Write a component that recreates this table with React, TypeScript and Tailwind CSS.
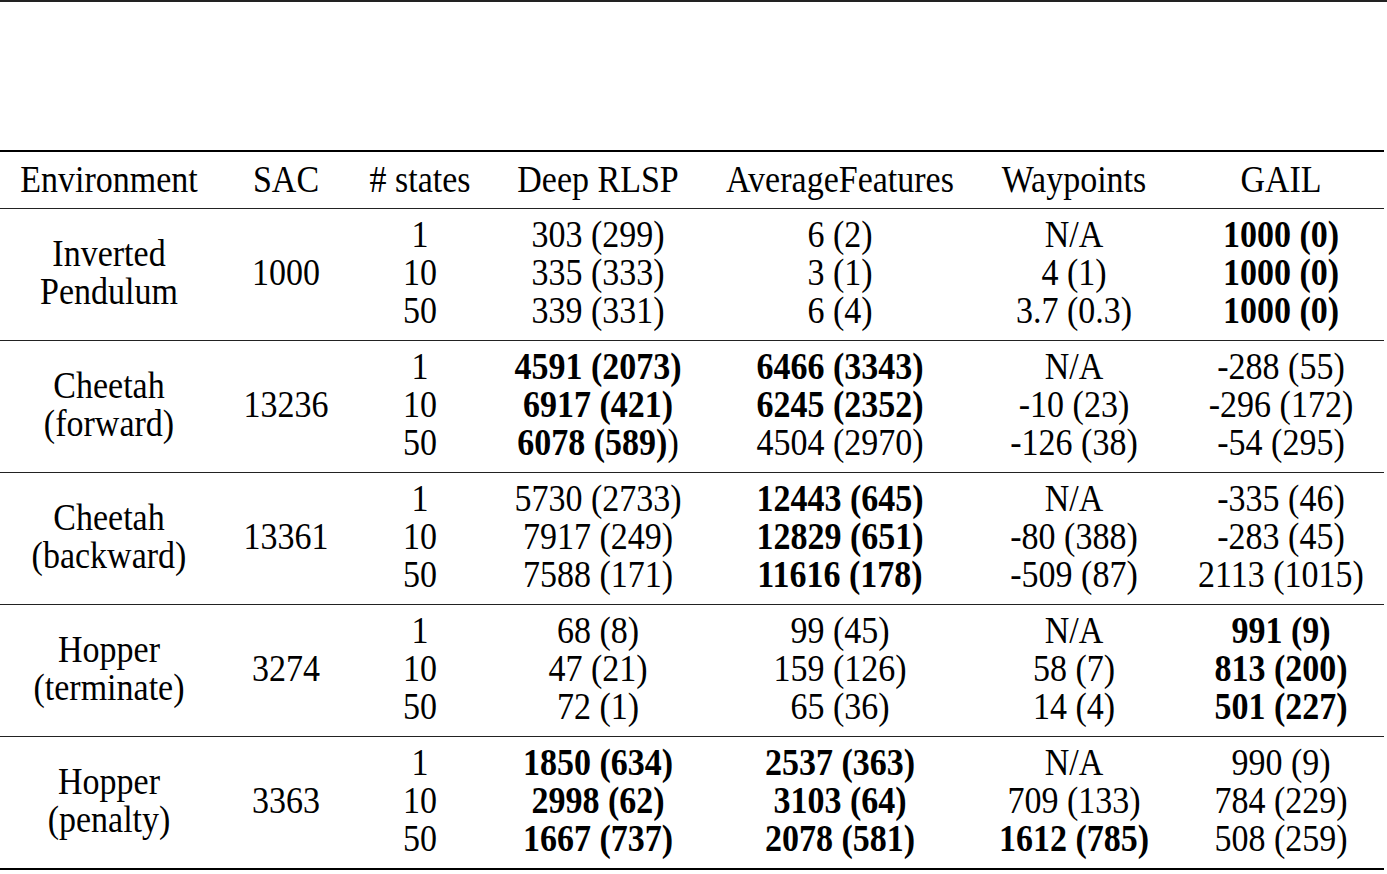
import React from "react";

type Part = { t: string; b?: boolean };
type Cell = Part[];

const n = (t: string): Cell => [{ t }];
const b = (t: string): Cell => [{ t, b: true }];

interface Group {
  env: [string, string];
  sac: string;
  rows: { s: string; cells: Cell[] }[];
}

const groups: Group[] = [
  {
    env: ["Inverted", "Pendulum"],
    sac: "1000",
    rows: [
      { s: "1", cells: [n("303 (299)"), n("6 (2)"), n("N/A"), b("1000 (0)")] },
      { s: "10", cells: [n("335 (333)"), n("3 (1)"), n("4 (1)"), b("1000 (0)")] },
      { s: "50", cells: [n("339 (331)"), n("6 (4)"), n("3.7 (0.3)"), b("1000 (0)")] },
    ],
  },
  {
    env: ["Cheetah", "(forward)"],
    sac: "13236",
    rows: [
      { s: "1", cells: [b("4591 (2073)"), b("6466 (3343)"), n("N/A"), n("-288 (55)")] },
      { s: "10", cells: [b("6917 (421)"), b("6245 (2352)"), n("-10 (23)"), n("-296 (172)")] },
      { s: "50", cells: [[{ t: "6078 (589)", b: true }, { t: ")" }], n("4504 (2970)"), n("-126 (38)"), n("-54 (295)")] },
    ],
  },
  {
    env: ["Cheetah", "(backward)"],
    sac: "13361",
    rows: [
      { s: "1", cells: [n("5730 (2733)"), b("12443 (645)"), n("N/A"), n("-335 (46)")] },
      { s: "10", cells: [n("7917 (249)"), b("12829 (651)"), n("-80 (388)"), n("-283 (45)")] },
      { s: "50", cells: [n("7588 (171)"), b("11616 (178)"), n("-509 (87)"), n("2113 (1015)")] },
    ],
  },
  {
    env: ["Hopper", "(terminate)"],
    sac: "3274",
    rows: [
      { s: "1", cells: [n("68 (8)"), n("99 (45)"), n("N/A"), b("991 (9)")] },
      { s: "10", cells: [n("47 (21)"), n("159 (126)"), n("58 (7)"), b("813 (200)")] },
      { s: "50", cells: [n("72 (1)"), n("65 (36)"), n("14 (4)"), b("501 (227)")] },
    ],
  },
  {
    env: ["Hopper", "(penalty)"],
    sac: "3363",
    rows: [
      { s: "1", cells: [b("1850 (634)"), b("2537 (363)"), n("N/A"), n("990 (9)")] },
      { s: "10", cells: [b("2998 (62)"), b("3103 (64)"), n("709 (133)"), n("784 (229)")] },
      { s: "50", cells: [b("1667 (737)"), b("2078 (581)"), b("1612 (785)"), n("508 (259)")] },
    ],
  },
];

const COLS = "grid grid-cols-[218px_136px_132px_224px_260px_208px_206px]";
// glyphs in the reference sit a bit taller than Liberation Serif's
const TALL = "inline-block whitespace-nowrap scale-y-[1.1]";

function Text({ cell }: { cell: Cell }) {
  return (
    <span className={TALL}>
      {cell.map((p, i) => (
        <span key={i} className={p.b ? "font-bold" : ""}>{p.t}</span>
      ))}
    </span>
  );
}

function GroupBlock({ g }: { g: Group }) {
  return (
    <div className={`${COLS} grid-rows-[38px_38px_38px] pt-[7px] pb-[10px]`}>
      <div className="row-span-3 col-start-1 row-start-1 flex flex-col items-center justify-center leading-[38px]">
        <span className={TALL}>{g.env[0]}</span>
        <span className={TALL}>{g.env[1]}</span>
      </div>
      <div className="row-span-3 col-start-2 row-start-1 flex items-center justify-center">
        <span className={TALL}>{g.sac}</span>
      </div>
      {g.rows.map((r, ri) => (
        <React.Fragment key={ri}>
          <div className="col-start-3 flex items-center justify-center">
            <span className={TALL}>{r.s}</span>
          </div>
          {r.cells.map((c, ci) => (
            <div key={ci} className="flex items-center justify-center">
              <Text cell={c} />
            </div>
          ))}
        </React.Fragment>
      ))}
    </div>
  );
}

export default function App() {
  const headers = ["Environment", "SAC", "# states", "Deep RLSP", "AverageFeatures", "Waypoints", "GAIL"];
  return (
    <div
      className="w-[1387px] h-[874px] bg-white text-black text-[34px] leading-[38px] overflow-hidden"
      style={{ fontFamily: '"Liberation Serif", "Times New Roman", serif' }}
    >
      <div className="h-[2px] bg-[#222]" />
      <div className="w-[1384px] mt-[148px]">
        <div className="h-[2px] bg-black" />
        <div className={`${COLS} h-[56px]`}>
          {headers.map((h) => (
            <div key={h} className="flex items-center justify-center">
              <span className={TALL}>{h}</span>
            </div>
          ))}
        </div>
        {groups.map((g, i) => (
          <React.Fragment key={i}>
            <div className="h-px bg-[#222]" />
            <GroupBlock g={g} />
          </React.Fragment>
        ))}
        <div className="h-[2px] bg-black" />
      </div>
    </div>
  );
}
